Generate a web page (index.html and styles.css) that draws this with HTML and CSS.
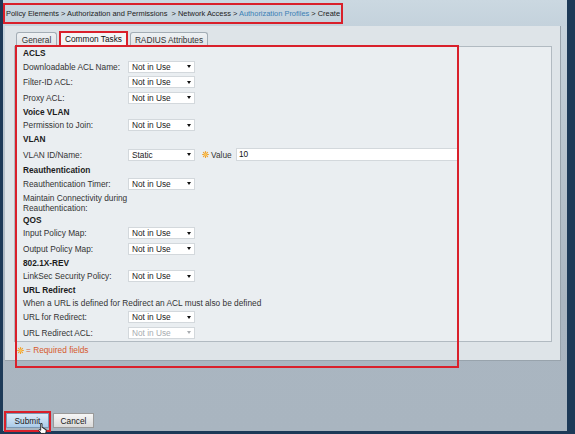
FILE: index.html
```html
<!DOCTYPE html>
<html>
<head>
<meta charset="utf-8">
<link rel="stylesheet" href="styles.css">
</head>
<body>
<div class="screen">
  <div class="frame">
    <div class="topbar">
      <div class="crumb">Policy Elements &gt; Authorization and Permissions &nbsp;&gt; Network Access &gt; <span class="link">Authorization Profiles</span> &gt; Create</div>
    </div>
    <div class="panel">
      <div class="tabs">
        <div class="tab t-general">General</div>
        <div class="tab t-common">Common Tasks</div>
        <div class="tab t-radius">RADIUS Attributes</div>
      </div>
      <div class="tabbox">
        <div class="row head">ACLS</div>
        <div class="row fld"><span class="lbl">Downloadable ACL Name:</span><span class="sel"><span>Not in Use</span><i class="arr"></i></span></div>
        <div class="row fld"><span class="lbl">Filter-ID ACL:</span><span class="sel"><span>Not in Use</span><i class="arr"></i></span></div>
        <div class="row fld"><span class="lbl">Proxy ACL:</span><span class="sel"><span>Not in Use</span><i class="arr"></i></span></div>
        <div class="row head">Voice VLAN</div>
        <div class="row fld"><span class="lbl">Permission to Join:</span><span class="sel"><span>Not in Use</span><i class="arr"></i></span></div>
        <div class="row head">VLAN</div>
        <div class="row fld vlan"><span class="lbl">VLAN ID/Name:</span><span class="sel"><span>Static</span><i class="arr"></i></span>
          <svg class="star" viewBox="0 0 10 10" width="7" height="7"><g stroke="#f0a22e" stroke-width="1.6" stroke-linecap="round"><line x1="5" y1="0.8" x2="5" y2="9.2"/><line x1="0.8" y1="5" x2="9.2" y2="5"/><line x1="2" y1="2" x2="8" y2="8"/><line x1="8" y1="2" x2="2" y2="8"/></g><circle cx="5" cy="5" r="2.2" fill="#f7c25a"/></svg>
          <span class="vlbl">Value</span><span class="inp">10</span></div>
        <div class="row head">Reauthentication</div>
        <div class="row fld"><span class="lbl">Reauthentication Timer:</span><span class="sel"><span>Not in Use</span><i class="arr"></i></span></div>
        <div class="row txt2">Maintain Connectivity during<br>Reauthentication:</div>
        <div class="row head">QOS</div>
        <div class="row fld"><span class="lbl">Input Policy Map:</span><span class="sel"><span>Not in Use</span><i class="arr"></i></span></div>
        <div class="row fld"><span class="lbl">Output Policy Map:</span><span class="sel"><span>Not in Use</span><i class="arr"></i></span></div>
        <div class="row head">802.1X-REV</div>
        <div class="row fld"><span class="lbl">LinkSec Security Policy:</span><span class="sel"><span>Not in Use</span><i class="arr"></i></span></div>
        <div class="row head">URL Redirect</div>
        <div class="row note">When a URL is defined for Redirect an ACL must also be defined</div>
        <div class="row fld"><span class="lbl">URL for Redirect:</span><span class="sel"><span>Not in Use</span><i class="arr"></i></span></div>
        <div class="row fld"><span class="lbl">URL Redirect ACL:</span><span class="sel dis"><span>Not in Use</span><i class="arr"></i></span></div>
      </div>
      <div class="req">
        <svg class="star" viewBox="0 0 10 10" width="7" height="7"><g stroke="#f0a22e" stroke-width="1.6" stroke-linecap="round"><line x1="5" y1="0.8" x2="5" y2="9.2"/><line x1="0.8" y1="5" x2="9.2" y2="5"/><line x1="2" y1="2" x2="8" y2="8"/><line x1="8" y1="2" x2="2" y2="8"/></g><circle cx="5" cy="5" r="2.2" fill="#f7c25a"/></svg>
        <span>= Required fields</span>
      </div>
    </div>
    <div class="buttons">
      <div class="submitwrap"><div class="btn submit">Submit</div></div>
      <div class="btn cancel">Cancel</div>
    </div>
  </div>
  <div class="redbox"></div>
  <svg class="cursor" viewBox="0 0 10 12" width="9" height="11"><path d="M3 0.5 L4.5 0.5 L4.5 5 L6 5 L6 6 L7.5 6 L7.5 7 L9 7 L9 10.5 L7.5 11.5 L3.5 11.5 L0.8 8 L1.5 7 L3 8 Z" fill="#fff" stroke="#111" stroke-width="0.9" stroke-linejoin="round"/></svg>
</div>
</body>
</html>
```
FILE: styles.css
```css
html, body {
  margin: 0;
  padding: 0;
  background: #1c3856;
}
.screen {
  position: relative;
  width: 575px;
  height: 434px;
  overflow: hidden;
  background: #1d3a58;
  font-family: "Liberation Sans", Arial, sans-serif;
  font-size: 8.3px;
  color: #333;
}
.frame {
  margin-left: 3px;
  width: 564px;
  height: 431px;
  background: linear-gradient(#c9d6df 0, #bcc8d1 120px, #aab6c1 300px, #a9b5c0 431px);
  display: flex;
  flex-direction: column;
}
.topbar {
  height: 26px;
  padding-top: 3px;
  box-sizing: border-box;
  background: linear-gradient(#cbd8e1, #c4d2dc);
}
.crumb {
  width: 340px;
  height: 21px;
  box-sizing: border-box;
  border: 2px solid #d9202b;
  padding-left: 1px;
  line-height: 17px;
  font-size: 7.45px;
  color: #222;
  white-space: nowrap;
  overflow: hidden;
}
.crumb .link { color: #3a7fb5; }
.panel {
  margin-left: 2px;
  width: 556px;
  height: 335px;
  box-sizing: border-box;
  background: #dee4e8;
  border-right: 1px solid #98a3ac;
  border-bottom: 1px solid #98a3ac;
  display: flex;
  flex-direction: column;
}
.tabs {
  display: flex;
  gap: 2px;
  padding-left: 11px;
  padding-top: 6px;
  height: 20px;
  box-sizing: border-box;
  align-items: flex-end;
}
.tab {
  height: 14px;
  box-sizing: border-box;
  border: 1px solid #a3adb5;
  border-bottom: none;
  border-radius: 3px 3px 0 0;
  background: linear-gradient(#eef1f3, #dfe4e8);
  color: #333;
  display: flex;
  align-items: center;
  justify-content: center;
  white-space: nowrap;
}
.t-general { width: 41px; }
.t-common {
  width: 69px;
  height: 16px;
  border: 2px solid #d9202b;
  border-radius: 0;
  background: #f3f5f6;
  color: #111;
  margin-bottom: -1px;
  position: relative;
}
.t-radius { width: 78px; }
.tabbox {
  margin-left: 9px;
  width: 538px;
  height: 296px;
  box-sizing: border-box;
  background: #eaeef1;
  border: 1px solid #b1bac1;
  padding-left: 8px;
  display: flex;
  flex-direction: column;
}
.row {
  display: flex;
  align-items: center;
  white-space: nowrap;
  flex: none;
}
.head {
  height: 12px;
  font-weight: bold;
  color: #1b1b1b;
}
.fld { height: 15.5px; }
.vlan { height: 19px; }
.txt2 {
  height: 22px;
  line-height: 10.5px;
  padding-top: 1px;
  box-sizing: border-box;
  display: block;
}
.note { height: 13.5px; }
.lbl { width: 105px; flex: none; }
.sel {
  width: 67px;
  height: 12px;
  box-sizing: border-box;
  background: #fff;
  border: 1px solid #d3d8dc;
  display: flex;
  align-items: center;
  justify-content: space-between;
  padding: 0 3px 0 3px;
  color: #222;
}
.arr {
  width: 0;
  height: 0;
  border-left: 2.5px solid transparent;
  border-right: 2.5px solid transparent;
  border-top: 3px solid #111;
}
.sel.dis { color: #a7acb0; }
.sel.dis .arr { border-top-color: #a9adb1; }
.star { margin-left: 7px; flex: none; }
.vlbl { margin-left: 2px; width: 25px; }
.inp {
  width: 223px;
  height: 13px;
  box-sizing: border-box;
  background: #fff;
  border: 1px solid #d3d8dc;
  padding-left: 2px;
  line-height: 11px;
  color: #111;
}
.req {
  display: flex;
  align-items: center;
  height: 14px;
  margin-top: 1px;
  padding-left: 7px;
  color: #d65a2c;
}
.req .star { margin-left: 5px; margin-right: 2px; }
.buttons {
  margin-top: auto;
  display: flex;
  align-items: flex-start;
  padding-left: 1px;
  height: 20px;
}
.submitwrap {
  border: 2px solid #d9202b;
  padding-bottom: 2px;
}
.btn {
  height: 15px;
  box-sizing: border-box;
  display: flex;
  align-items: center;
  justify-content: center;
  color: #1a1a1a;
}
.submit {
  width: 43px;
  background: linear-gradient(#dcebf8, #abcbe9);
  border: 1px solid #7b98b3;
}
.cancel {
  width: 41px;
  margin-left: 2px;
  margin-top: 2px;
  background: linear-gradient(#f6f6f6, #dadada);
  border: 1px solid #9a9a9a;
}
.redbox {
  position: absolute;
  left: 15px;
  top: 45px;
  width: 444px;
  height: 323px;
  box-sizing: border-box;
  border: 2px solid #d9202b;
  pointer-events: none;
}
.cursor {
  position: absolute;
  left: 38px;
  top: 423px;
}
```
